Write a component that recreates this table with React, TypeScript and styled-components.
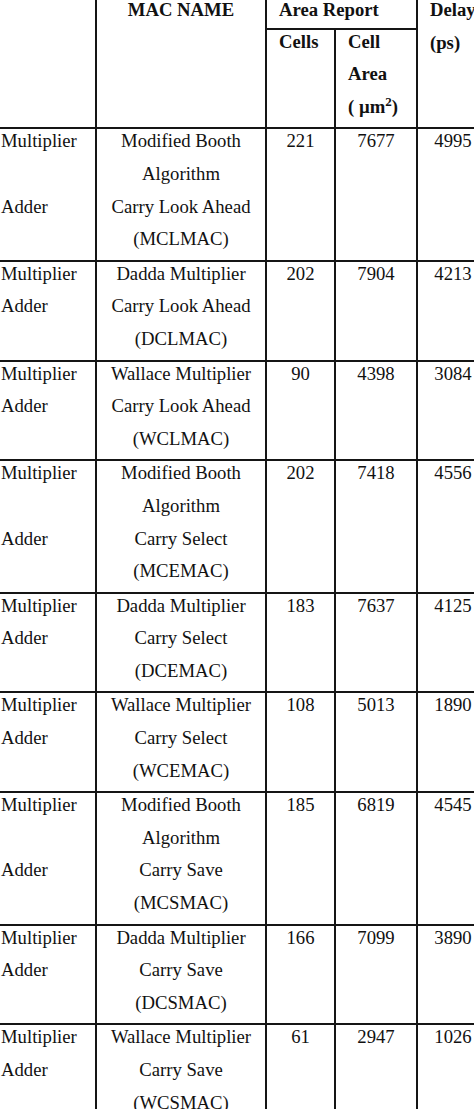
import React from "react";
import styled, { createGlobalStyle } from "styled-components";

const Global = createGlobalStyle`
  html, body {
    margin: 0;
    padding: 0;
    background: #ffffff;
    overflow: hidden;
  }
  body {
    font-family: "Liberation Serif", "Times New Roman", serif;
    color: #111111;
  }
`;

const Viewport = styled.div`
  width: 474px;
  height: 1109px;
  overflow: hidden;
`;

const Table = styled.table`
  border-collapse: collapse;
  table-layout: fixed;
  width: 501px;
  margin: -7px 0 0 -13px;
  font-family: "Liberation Serif", "Times New Roman", serif;
  font-size: 18.7px;
  line-height: 32.6px;
`;

const Col = styled.col<{ $w: number }>`
  width: ${(p) => p.$w}px;
`;

const Cell = styled.td<{ $align?: "left" | "center"; $thinLeft?: boolean; $bold?: boolean }>`
  border: 2px solid #151515;
  ${(p) => (p.$thinLeft ? "border-left: 1.5px solid #6a6a6a;" : "")}
  padding: 0 12px;
  vertical-align: top;
  text-align: ${(p) => p.$align ?? "center"};
  font-weight: ${(p) => (p.$bold ? 700 : 400)};
  white-space: nowrap;
  overflow: hidden;
`;

const Lines = styled.div<{ $lift?: number }>`
  margin: ${(p) => -(p.$lift ?? 4)}px 0 ${(p) => p.$lift ?? 4}px;
`;

const Line = styled.div`
  height: 32.6px;
`;

const Sup = styled.sup`
  font-size: 13px;
  line-height: 0;
  vertical-align: 7px;
`;

type Row = {
  name: string[];
  cells: string;
  area: string;
  delay: string;
};

const rows: Row[] = [
  { name: ["Modified Booth", "Algorithm", "Carry Look Ahead", "(MCLMAC)"], cells: "221", area: "7677", delay: "4995" },
  { name: ["Dadda Multiplier", "Carry Look Ahead", "(DCLMAC)"], cells: "202", area: "7904", delay: "4213" },
  { name: ["Wallace Multiplier", "Carry Look Ahead", "(WCLMAC)"], cells: "90", area: "4398", delay: "3084" },
  { name: ["Modified Booth", "Algorithm", "Carry Select", "(MCEMAC)"], cells: "202", area: "7418", delay: "4556" },
  { name: ["Dadda Multiplier", "Carry Select", "(DCEMAC)"], cells: "183", area: "7637", delay: "4125" },
  { name: ["Wallace Multiplier", "Carry Select", "(WCEMAC)"], cells: "108", area: "5013", delay: "1890" },
  { name: ["Modified Booth", "Algorithm", "Carry Save", "(MCSMAC)"], cells: "185", area: "6819", delay: "4545" },
  { name: ["Dadda Multiplier", "Carry Save", "(DCSMAC)"], cells: "166", area: "7099", delay: "3890" },
  { name: ["Wallace Multiplier", "Carry Save", "(WCSMAC)"], cells: "61", area: "2947", delay: "1026" },
];

const Stack: React.FC<{ items: string[]; lift?: number }> = ({ items, lift }) => (
  <Lines $lift={lift}>
    {items.map((t, i) => (
      <Line key={i}>{t}</Line>
    ))}
  </Lines>
);

export default function App() {
  return (
    <Viewport>
      <Global />
      <Table>
        <colgroup>
          <Col $w={108} />
          <Col $w={170} />
          <Col $w={69} />
          <Col $w={82} />
          <Col $w={72} />
        </colgroup>
        <thead>
          <tr>
            <Cell rowSpan={2} $align="left" />
            <Cell rowSpan={2} $bold>
              <Stack items={["MAC NAME"]} lift={1} />
            </Cell>
            <Cell colSpan={2} $align="left" $bold $thinLeft>
              <Stack items={["Area Report"]} lift={1} />
            </Cell>
            <Cell rowSpan={2} $align="left" $bold>
              <Lines $lift={1}>
                <Line>Delay</Line>
                <Line>(ps)</Line>
              </Lines>
            </Cell>
          </tr>
          <tr>
            <Cell $align="left" $bold $thinLeft>
              <Stack items={["Cells"]} />
            </Cell>
            <Cell $align="left" $bold>
              <Lines>
                <Line>Cell</Line>
                <Line>Area</Line>
                <Line>
                  ( µm<Sup>2</Sup>)
                </Line>
              </Lines>
            </Cell>
          </tr>
        </thead>
        <tbody>
          {rows.map((r, i) => (
            <tr key={i}>
              <Cell $align="left">
                <Stack items={r.name.length === 4 ? ["Multiplier", "", "Adder"] : ["Multiplier", "Adder"]} />
              </Cell>
              <Cell>
                <Stack items={r.name} />
              </Cell>
              <Cell $thinLeft>
                <Stack items={[r.cells]} />
              </Cell>
              <Cell>
                <Stack items={[r.area]} />
              </Cell>
              <Cell>
                <Stack items={[r.delay]} />
              </Cell>
            </tr>
          ))}
        </tbody>
      </Table>
    </Viewport>
  );
}
